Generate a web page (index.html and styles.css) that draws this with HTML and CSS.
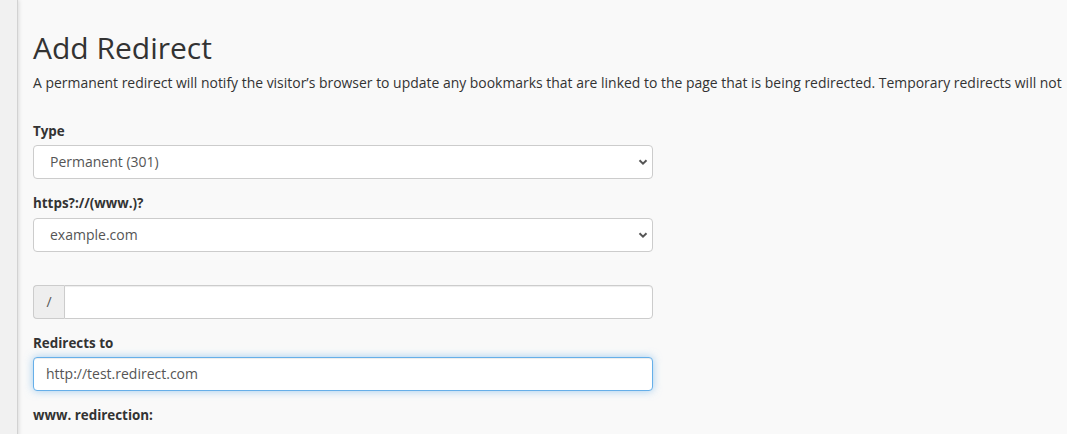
FILE: index.html
```html
<!DOCTYPE html>
<html lang="en">
<head>
<meta charset="utf-8">
<title>Add Redirect</title>
<link rel="stylesheet" href="styles.css">
</head>
<body>
<div class="layout">
  <aside class="sidebar"></aside>
  <main class="content">
    <h1 class="page-title">Add Redirect</h1>
    <p class="intro">A permanent redirect will notify the visitor’s browser to update any bookmarks that are linked to the page that is being redirected. Temporary redirects will not</p>
    <form class="form">
      <div class="form-group">
        <label class="label">Type</label>
        <div class="select">
          <span class="select-value">Permanent (301)</span>
          <svg class="chevron" width="10" height="8" viewBox="0 0 10 8"><path d="M1.5 2.2 L5 5.6 L8.5 2.2" fill="none" stroke="#555" stroke-width="2"/></svg>
        </div>
      </div>
      <div class="form-group">
        <label class="label">https?://(www.)?</label>
        <div class="select">
          <span class="select-value">example.com</span>
          <svg class="chevron" width="10" height="8" viewBox="0 0 10 8"><path d="M1.5 2.2 L5 5.6 L8.5 2.2" fill="none" stroke="#555" stroke-width="2"/></svg>
        </div>
      </div>
      <div class="form-group">
        <div class="label-spacer"></div>
        <div class="input-group">
          <span class="addon">/</span>
          <span class="input input-joined"></span>
        </div>
      </div>
      <div class="form-group">
        <label class="label">Redirects to</label>
        <div class="input input-focus">http://test.redirect.com</div>
      </div>
      <div class="form-group">
        <label class="label">www. redirection:</label>
      </div>
    </form>
  </main>
</div>
</body>
</html>
```

FILE: styles.css
```css
* { box-sizing: border-box; }
html, body {
  margin: 0;
  height: 100%;
  overflow: hidden;
}
body {
  background: #f9f9f9;
  font-family: "Open Sans", "Liberation Sans", sans-serif;
  font-size: 13px;
  line-height: 1.42857;
  color: #333;
}
.layout {
  display: flex;
  min-height: 100%;
}
.sidebar {
  flex: 0 0 18px;
  background: #f1f1f1;
  border-right: 1px solid #d2d2d2;
  box-shadow: 1px 0 4px rgba(0, 0, 0, 0.12);
  position: relative;
  z-index: 1;
}
.content {
  flex: 1;
  padding-left: 15px;
  min-width: 0;
}
.page-title {
  font-size: 30px;
  font-weight: 400;
  line-height: 1.1;
  margin: 31px 0 10px;
  color: #333;
}
.intro {
  margin: 0 0 29px;
  font-size: 13.95px;
  line-height: 18.57px;
  white-space: nowrap;
}
.form {
  width: 620px;
}
.form-group {
  margin-bottom: 15px;
}
.label {
  display: block;
  font-weight: 700;
  font-size: 13.4px;
  line-height: 18.57px;
  margin-bottom: 5px;
}
.label-spacer {
  height: 18px;
}
.select {
  height: 34px;
  background: #fff;
  border: 1px solid #ccc;
  border-radius: 4px;
  display: flex;
  align-items: center;
  justify-content: space-between;
  padding: 0 4px 0 16px;
  color: #555;
  font-size: 14px;
}
.chevron {
  display: block;
}
.input-group {
  display: flex;
  height: 34px;
}
.addon {
  flex: 0 0 31px;
  display: flex;
  align-items: center;
  justify-content: center;
  background: #eee;
  border: 1px solid #ccc;
  border-right: 0;
  border-radius: 4px 0 0 4px;
  color: #555;
  font-size: 14px;
}
.input {
  display: flex;
  align-items: center;
  height: 34px;
  background: #fff;
  border: 1px solid #ccc;
  border-radius: 4px;
  padding: 0 12px;
  color: #555;
  font-size: 14px;
  box-shadow: inset 0 1px 1px rgba(0, 0, 0, 0.075);
}
.input-joined {
  flex: 1;
  border-radius: 0 4px 4px 0;
}
.input-focus {
  border-color: #66afe9;
  box-shadow: inset 0 1px 1px rgba(0, 0, 0, 0.075), 0 0 8px rgba(102, 175, 233, 0.6);
}
```
